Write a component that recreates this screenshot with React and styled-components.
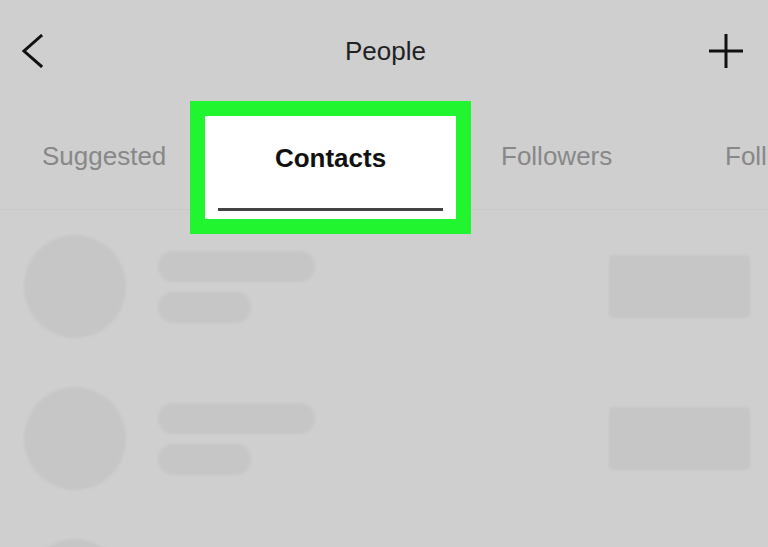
import React from 'react';
import styled, { createGlobalStyle } from 'styled-components';

const tabs = [
  { label: 'Suggested', width: 148, pad: 0 },
  { label: 'Contacts', active: true },
  { label: 'Followers', width: 253, pad: 29 },
  { label: 'Following', width: 200, pad: 0 },
];

const rows = [1, 2, 3];

const App = () => {
  return (
    <Page>
      <GlobalStyle />
      <Header>
        <IconButton aria-label="Back">
          <svg width="22" height="34" viewBox="0 0 22 34">
            <polyline points="19,2 2,17 19,32" fill="none" stroke="#111" strokeWidth="3" strokeLinecap="square" />
          </svg>
        </IconButton>
        <Title>People</Title>
        <IconButton aria-label="Add">
          <svg width="34" height="34" viewBox="0 0 34 34">
            <path d="M17 0V34M0 17H34" stroke="#111" strokeWidth="3" />
          </svg>
        </IconButton>
      </Header>

      <TabBar>
        {tabs.map((tab) =>
          tab.active ? (
            <ActiveTab key={tab.label}>
              <ActiveLabel>{tab.label}</ActiveLabel>
              <Underline />
            </ActiveTab>
          ) : (
            <Tab key={tab.label} $width={tab.width} $pad={tab.pad}>
              {tab.label}
            </Tab>
          )
        )}
      </TabBar>

      <List>
        {rows.map((n) => (
          <Row key={n}>
            <Avatar />
            <Lines>
              <Bar $width={157} />
              <Bar $width={93} />
            </Lines>
            <ButtonStub />
          </Row>
        ))}
      </List>
    </Page>
  );
};

export default App;

const GlobalStyle = createGlobalStyle`
  html, body {
    margin: 0;
    padding: 0;
    background: #cfcfcf;
    overflow: hidden;
  }
`;

const Page = styled.div`
  width: 768px;
  height: 547px;
  overflow: hidden;
  background: #cfcfcf;
  font-family: "Liberation Sans", Arial, sans-serif;
`;

const Header = styled.div`
  height: 101px;
  display: flex;
  align-items: center;
  justify-content: space-between;
  padding: 0 25px 0 22px;
  box-sizing: border-box;
`;

const IconButton = styled.div`
  display: flex;
  align-items: center;
  justify-content: center;
  margin-top: 1px;
`;

const Title = styled.div`
  font-size: 26px;
  color: #222;
  margin-left: 18px;
  margin-top: 1px;
`;

const TabBar = styled.div`
  height: 109px;
  display: flex;
  align-items: flex-start;
  padding-left: 42px;
  border-bottom: 1px solid #c9c9c9;
  box-sizing: border-box;
  white-space: nowrap;
`;

const Tab = styled.div`
  flex: 0 0 ${(p) => p.$width}px;
  height: 100%;
  display: flex;
  align-items: center;
  padding-top: 3px;
  padding-left: ${(p) => p.$pad}px;
  box-sizing: border-box;
  font-size: 26px;
  color: #888;
`;

const ActiveTab = styled.div`
  position: relative;
  z-index: 1;
  flex: 0 0 281px;
  height: 133px;
  margin-bottom: -24px;
  margin-right: 1px;
  border: 15px solid #21f52f;
  background: #fff;
  box-sizing: border-box;
  display: flex;
  flex-direction: column;
  align-items: center;
  padding: 27px 13px 8px;
`;

const ActiveLabel = styled.div`
  font-size: 26px;
  font-weight: 700;
  color: #111;
`;

const Underline = styled.div`
  margin-top: auto;
  width: 100%;
  height: 3px;
  background: #444;
`;

const List = styled.div`
  display: flex;
  flex-direction: column;
  gap: 49px;
  padding: 25px 18px 0 24px;
`;

const Row = styled.div`
  display: flex;
  align-items: center;
`;

const Avatar = styled.div`
  flex: 0 0 102px;
  height: 103px;
  border-radius: 50%;
  background: #c6c6c6;
  filter: blur(1px);
`;

const Lines = styled.div`
  display: flex;
  flex-direction: column;
  gap: 10px;
  margin-left: 32px;
  flex: 1;
`;

const Bar = styled.div`
  width: ${(p) => p.$width}px;
  height: 31px;
  border-radius: 16px;
  background: #c6c6c6;
  filter: blur(1px);
`;

const ButtonStub = styled.div`
  flex: 0 0 141px;
  height: 63px;
  border-radius: 4px;
  background: #c6c6c6;
  filter: blur(1px);
`;
